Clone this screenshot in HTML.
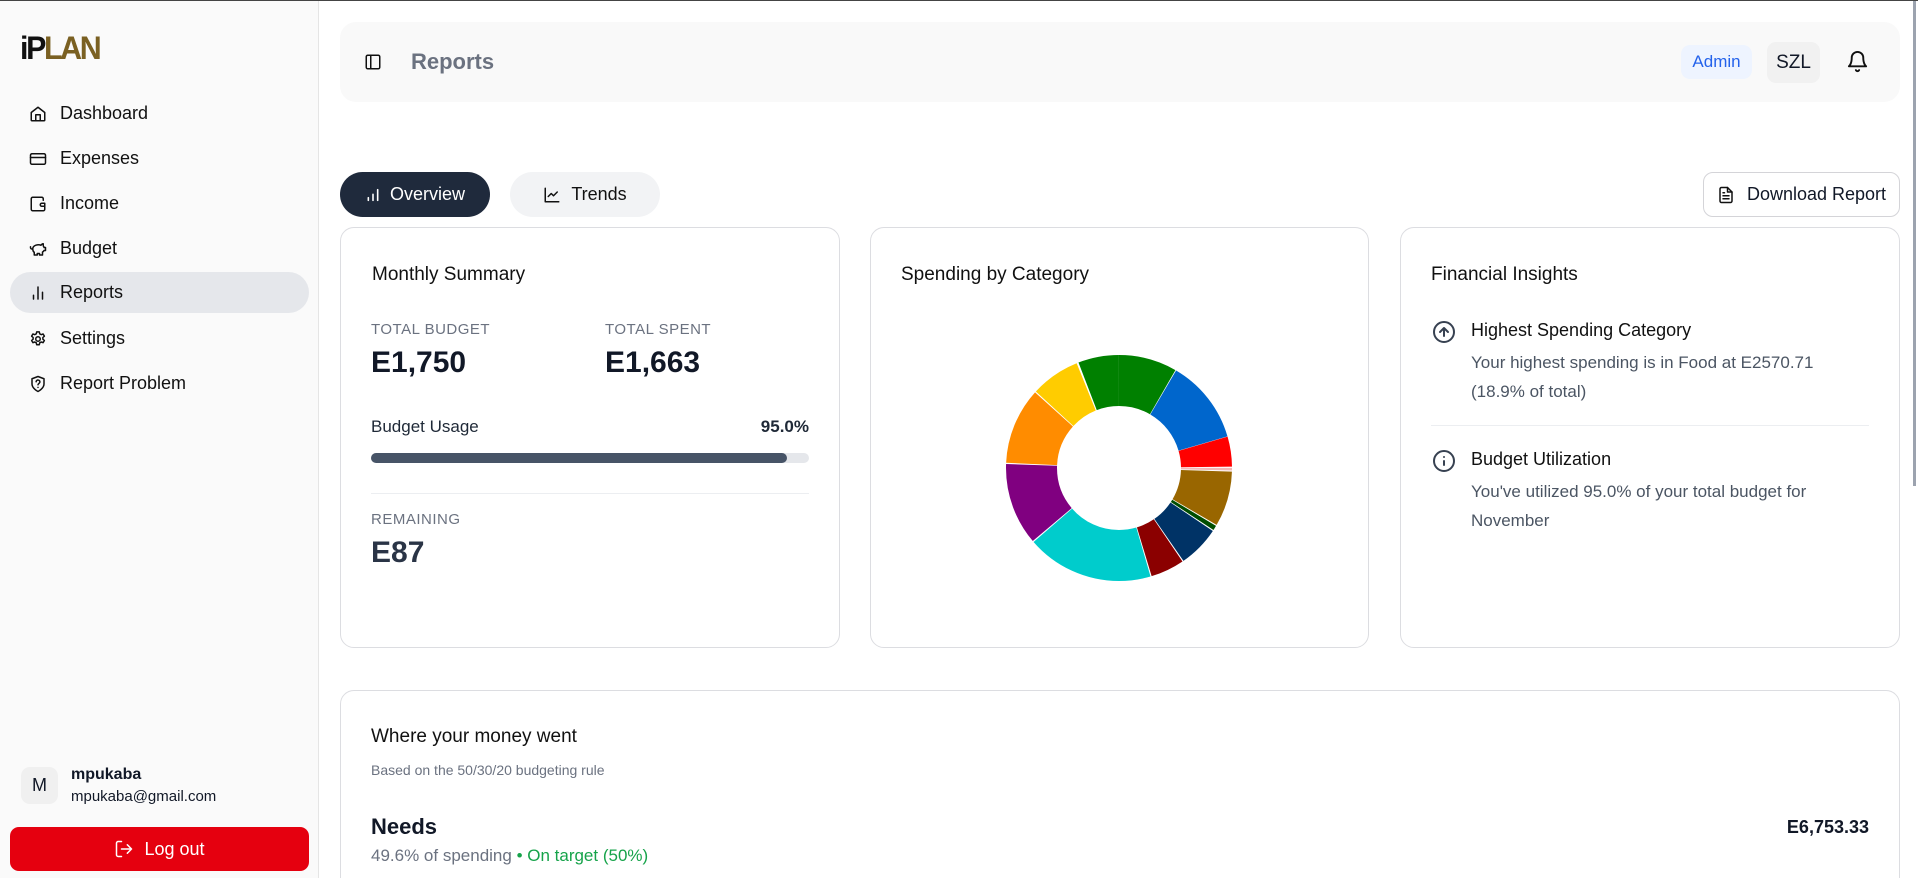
<!DOCTYPE html>
<html><head><meta charset="utf-8"><style>
*{box-sizing:border-box;margin:0;padding:0}
html,body{width:1918px;height:878px;overflow:hidden}
body{background:#fff;font-family:"Liberation Sans",sans-serif;color:#111827}
#w{position:relative;width:1918px;height:878px;overflow:hidden;border-top:1px solid #444}
.abs{position:absolute}
.side{left:0;top:0;width:319px;height:878px;background:#fafafa;border-right:1px solid #e5e5e5}
.nav{position:absolute;left:10px;width:299px;height:41px;display:flex;align-items:center;font-size:18px;color:#111}
.nav svg{position:absolute;left:19px}
.nav span{position:absolute;left:50px}
.nav.act{background:#e5e7eb;border-radius:21px}
svg.i{fill:none;stroke:#111;stroke-width:2;stroke-linecap:round;stroke-linejoin:round}
.card{position:absolute;border:1px solid #dcdde1;border-radius:14px;background:#fff}
.ct{position:absolute;font-size:19px;color:#111}
.lbl{position:absolute;font-size:15px;color:#6b7280;letter-spacing:.5px}
.big{position:absolute;font-size:30px;font-weight:bold;color:#111827}
.txt{position:absolute;font-size:17px;color:#4b5563;line-height:29px}
</style></head><body><div id="w">
<div class="abs side"></div>
<div class="abs" style="left:20px;top:29px;font-size:32px;font-weight:900;letter-spacing:-2.5px;transform:scaleX(0.95);transform-origin:left"><span style="color:#111">iP</span><span style="color:#7a6022">LAN</span></div>
<div class="nav" style="top:92px"><svg class="i" width="18" height="18" viewBox="0 0 24 24"><path d="M3 10l9-7 9 7v10a1 1 0 0 1-1 1H4a1 1 0 0 1-1-1z"/><path d="M9 21v-8h6v8"/></svg><span>Dashboard</span></div>
<div class="nav" style="top:137px"><svg class="i" width="18" height="18" viewBox="0 0 24 24"><rect x="2" y="5" width="20" height="14" rx="2"/><path d="M2 10h20"/></svg><span>Expenses</span></div>
<div class="nav" style="top:182px"><svg class="i" width="18" height="18" viewBox="0 0 24 24"><path d="M19 7V5a2 2 0 0 0-2-2H5a2 2 0 0 0-2 2v14a2 2 0 0 0 2 2h14a2 2 0 0 0 2-2v-4"/><path d="M21 11h-4a1 1 0 0 0 0 4h4z"/></svg><span>Income</span></div>
<div class="nav" style="top:227px"><svg class="i" width="18" height="18" viewBox="0 0 24 24"><path d="M19 5c-1.5 0-2.8 1.4-3 2-3.5-1.5-11-.3-11 5 0 1.8 0 3 2 4.5V20h4v-2h3v2h4v-4c1-.5 1.7-1 2-2h2v-4h-2c0-1-.5-1.5-1-2z"/><path d="M2 9v1c0 1.1.9 2 2 2h1"/></svg><span>Budget</span></div>
<div class="nav act" style="top:271px"><svg class="i" width="18" height="18" viewBox="0 0 24 24"><path d="M6 20v-5M12 20V4M18 20v-9"/></svg><span>Reports</span></div>
<div class="nav" style="top:317px"><svg class="i" width="18" height="18" viewBox="0 0 24 24"><circle cx="12" cy="12" r="3"/><path d="M10.3 2.5h3.4l.6 2.6 2 1.1 2.5-.9 1.7 2.9-2 1.8v2.2l2 1.8-1.7 2.9-2.5-.9-2 1.1-.6 2.6h-3.4l-.6-2.6-2-1.1-2.5.9-1.7-2.9 2-1.8v-2.2l-2-1.8 1.7-2.9 2.5.9 2-1.1z"/></svg><span>Settings</span></div>
<div class="nav" style="top:362px"><svg class="i" width="18" height="18" viewBox="0 0 24 24"><path d="M12 22s8-4 8-10V5l-8-3-8 3v7c0 6 8 10 8 10z"/><path d="M9.5 9a2.5 2.5 0 0 1 5 .5c0 1.5-2.5 2-2.5 3.5M12 16.5h.01"/></svg><span>Report Problem</span></div>

<div class="abs" style="left:21px;top:766px;width:37px;height:37px;border-radius:9px;background:#f0f0f0;font-size:18px;display:flex;align-items:center;justify-content:center">M</div>
<div class="abs" style="left:71px;top:765px;font-size:16px;font-weight:bold">mpukaba</div>
<div class="abs" style="left:71px;top:787px;font-size:15px">mpukaba@gmail.com</div>
<div class="abs" style="left:10px;top:826px;width:299px;height:44px;border-radius:9px;background:#e5000f;color:#fff;font-size:18px;display:flex;align-items:center;justify-content:center;gap:10px"><svg width="20" height="20" viewBox="0 0 24 24" fill="none" stroke="#fff" stroke-width="1.8" stroke-linecap="round" stroke-linejoin="round"><path d="M9 21H5a2 2 0 0 1-2-2V5a2 2 0 0 1 2-2h4M16 17l5-5-5-5M21 12H9"/></svg>Log out</div>

<div class="abs" style="left:340px;top:21px;width:1560px;height:80px;background:#f9f9f9;border-radius:16px"></div>
<svg class="abs i" style="left:364px;top:52px" width="18" height="18" viewBox="0 0 24 24"><rect x="3" y="3" width="18" height="18" rx="2"/><path d="M9 3v18"/></svg>
<div class="abs" style="left:411px;top:48px;font-size:22px;color:#6b7280;font-weight:bold">Reports</div>
<div class="abs" style="left:1681px;top:44px;width:71px;height:34px;border-radius:9px;background:#eef4ff;color:#2563eb;font-size:17px;display:flex;align-items:center;justify-content:center">Admin</div>
<div class="abs" style="left:1767px;top:41px;width:53px;height:41px;border-radius:9px;background:#f1f1f1;font-size:19px;display:flex;align-items:center;justify-content:center">SZL</div>
<svg class="abs i" style="left:1846px;top:49px" width="23" height="23" viewBox="0 0 24 24"><path d="M6 8a6 6 0 0 1 12 0c0 7 3 9 3 9H3s3-2 3-9"/><path d="M10.3 21a1.9 1.9 0 0 0 3.4 0"/></svg>

<div class="abs" style="left:340px;top:171px;width:150px;height:45px;border-radius:23px;background:#1f2a3c;color:#fff;font-size:18px;display:flex;align-items:center;justify-content:center;gap:9px"><svg width="16" height="16" viewBox="0 0 24 24" fill="none" stroke="#fff" stroke-width="2.4" stroke-linecap="round"><path d="M5 20v-4M12 20v-9M19 20V4"/></svg>Overview</div>
<div class="abs" style="left:510px;top:171px;width:150px;height:45px;border-radius:23px;background:#f2f3f5;color:#111;font-size:18px;display:flex;align-items:center;justify-content:center;gap:10px"><svg class="i" width="18" height="18" viewBox="0 0 24 24"><path d="M3 3v18h18"/><path d="M7 14l4-4 3 3 5-5"/></svg>Trends</div>
<div class="abs" style="left:1703px;top:171px;width:197px;height:45px;border-radius:10px;border:1px solid #d4d4d8;font-size:18px;display:flex;align-items:center;justify-content:center;gap:12px"><svg class="i" width="18" height="18" viewBox="0 0 24 24"><path d="M14 2H6a2 2 0 0 0-2 2v16a2 2 0 0 0 2 2h12a2 2 0 0 0 2-2V8z"/><path d="M14 2v6h6M8 13h8M8 17h8M8 9h2"/></svg>Download Report</div>

<div class="card" style="left:340px;top:226px;width:500px;height:421px"></div>
<div class="ct" style="left:372px;top:263px">Monthly Summary</div>
<div class="lbl" style="left:371px;top:320px">TOTAL BUDGET</div>
<div class="lbl" style="left:605px;top:320px">TOTAL SPENT</div>
<div class="big" style="left:371px;top:345px">E1,750</div>
<div class="big" style="left:605px;top:345px">E1,663</div>
<div class="abs" style="left:371px;top:416px;font-size:17px;color:#1f2937">Budget Usage</div>
<div class="abs" style="left:750px;top:416px;font-size:17px;color:#1f2937;font-weight:bold;width:59px;text-align:right">95.0%</div>
<div class="abs" style="left:371px;top:452px;width:438px;height:10px;border-radius:5px;background:#e5e7eb"><div style="width:416px;height:10px;border-radius:5px;background:#475467"></div></div>
<div class="abs" style="left:371px;top:492px;width:438px;height:1px;background:#eceef1"></div>
<div class="lbl" style="left:371px;top:510px">REMAINING</div>
<div class="big" style="left:371px;top:535px;color:#2a3446">E87</div>

<div class="card" style="left:870px;top:226px;width:499px;height:421px"></div>
<div class="ct" style="left:901px;top:263px">Spending by Category</div>
<svg class="abs" style="left:1000px;top:348px" width="238" height="238" viewBox="0 0 238 238">
<g transform="rotate(-90 119 119)" fill="none" stroke-width="51">
<circle cx="119" cy="119" r="87.5" pathLength="360" stroke="#008000" stroke-dasharray="30 360" stroke-dashoffset="0"/>
<circle cx="119" cy="119" r="87.5" pathLength="360" stroke="#008000" stroke-dasharray="21 360" stroke-dashoffset="-339.4"/>
<circle cx="119" cy="119" r="87.5" pathLength="360" stroke="#0066cc" stroke-dasharray="43.4 360" stroke-dashoffset="-30.4"/>
<circle cx="119" cy="119" r="87.5" pathLength="360" stroke="#ff0000" stroke-dasharray="15.4 360" stroke-dashoffset="-74"/>
<circle cx="119" cy="119" r="87.5" pathLength="360" stroke="#f4b6b6" stroke-dasharray="1.4 360" stroke-dashoffset="-90"/>
<circle cx="119" cy="119" r="87.5" pathLength="360" stroke="#996600" stroke-dasharray="28.4 360" stroke-dashoffset="-92"/>
<circle cx="119" cy="119" r="87.5" pathLength="360" stroke="#004d00" stroke-dasharray="2.4 360" stroke-dashoffset="-121"/>
<circle cx="119" cy="119" r="87.5" pathLength="360" stroke="#003366" stroke-dasharray="21.4 360" stroke-dashoffset="-124"/>
<circle cx="119" cy="119" r="87.5" pathLength="360" stroke="#8b0000" stroke-dasharray="17.4 360" stroke-dashoffset="-146"/>
<circle cx="119" cy="119" r="87.5" pathLength="360" stroke="#00cccc" stroke-dasharray="65.4 360" stroke-dashoffset="-164"/>
<circle cx="119" cy="119" r="87.5" pathLength="360" stroke="#800080" stroke-dasharray="42.4 360" stroke-dashoffset="-230"/>
<circle cx="119" cy="119" r="87.5" pathLength="360" stroke="#ff8c00" stroke-dasharray="39.4 360" stroke-dashoffset="-273"/>
<circle cx="119" cy="119" r="87.5" pathLength="360" stroke="#ffcc00" stroke-dasharray="25.4 360" stroke-dashoffset="-313"/>
</g></svg>

<div class="card" style="left:1400px;top:226px;width:500px;height:421px"></div>
<div class="ct" style="left:1431px;top:263px">Financial Insights</div>
<svg class="abs" style="left:1432px;top:319px" width="24" height="24" viewBox="0 0 24 24" fill="none" stroke="#374151" stroke-width="2" stroke-linecap="round" stroke-linejoin="round"><circle cx="12" cy="12" r="10"/><path d="M8 12l4-4 4 4M12 16V8"/></svg>
<div class="abs" style="left:1471px;top:319px;font-size:18px;color:#111">Highest Spending Category</div>
<div class="txt" style="left:1471px;top:347px">Your highest spending is in Food at E2570.71<br>(18.9% of total)</div>
<div class="abs" style="left:1431px;top:424px;width:438px;height:1px;background:#eceef1"></div>
<svg class="abs" style="left:1432px;top:448px" width="24" height="24" viewBox="0 0 24 24" fill="none" stroke="#374151" stroke-width="2" stroke-linecap="round"><circle cx="12" cy="12" r="10"/><path d="M12 16v-4M12 8h.01"/></svg>
<div class="abs" style="left:1471px;top:448px;font-size:18px;color:#111">Budget Utilization</div>
<div class="txt" style="left:1471px;top:476px">You've utilized 95.0% of your total budget for<br>November</div>

<div class="card" style="left:340px;top:689px;width:1560px;height:220px"></div>
<div class="abs" style="left:371px;top:725px;font-size:19px;color:#111">Where your money went</div>
<div class="abs" style="left:371px;top:761px;font-size:14px;color:#6b7280">Based on the 50/30/20 budgeting rule</div>
<div class="abs" style="left:371px;top:813px;font-size:22px;font-weight:bold;color:#111827">Needs</div>
<div class="abs" style="left:1700px;top:816px;width:169px;text-align:right;font-size:18px;font-weight:bold;color:#111827">E6,753.33</div>
<div class="abs" style="left:371px;top:845px;font-size:17px;color:#6b7280">49.6% of spending <span style="color:#16a34a">• On target (50%)</span></div>
<div class="abs" style="left:1913px;top:0;width:3px;height:485px;background:#9ca3af"></div>
</div></body></html>
